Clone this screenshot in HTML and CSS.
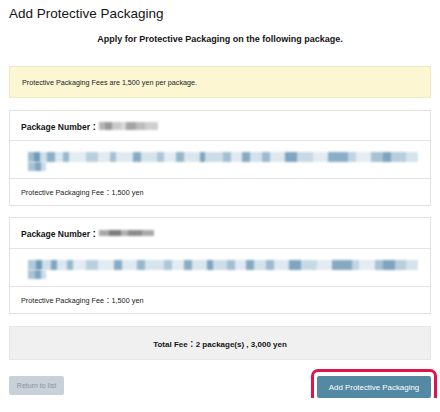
FILE: index.html
```html
<!DOCTYPE html>
<html lang="en">
<head>
<meta charset="utf-8">
<title>Add Protective Packaging</title>
<link rel="stylesheet" href="styles.css">
</head>
<body>
<main class="page">
  <h1 class="title">Add Protective Packaging</h1>
  <p class="lead">Apply for Protective Packaging on the following package.</p>

  <div class="notice">Protective Packaging Fees are 1,500 yen per package.</div>

  <section class="card">
    <div class="card-head">
      <span class="label">Package Number：</span>
      <span class="masked masked-a"></span>
    </div>
    <div class="card-addr">
      <div class="addr-line addr-long"></div>
      <div class="addr-line addr-short"></div>
    </div>
    <div class="card-fee">Protective Packaging Fee：1,500 yen</div>
  </section>

  <section class="card">
    <div class="card-head">
      <span class="label">Package Number：</span>
      <span class="masked masked-b"></span>
    </div>
    <div class="card-addr">
      <div class="addr-line addr-long alt"></div>
      <div class="addr-line addr-short"></div>
    </div>
    <div class="card-fee">Protective Packaging Fee：1,500 yen</div>
  </section>

  <div class="total">Total Fee：2 package(s) , 3,000 yen</div>

  <div class="actions">
    <button class="btn btn-back" type="button">Return to list</button>
    <span class="highlight">
      <button class="btn btn-primary" type="button">Add Protective Packaging</button>
    </span>
  </div>
</main>
</body>
</html>
```

FILE: styles.css
```css
* { box-sizing: border-box; }

html, body {
  margin: 0;
  padding: 0;
  background: #ffffff;
}

body {
  font-family: "Liberation Sans", Arial, "Noto Sans CJK JP", sans-serif;
  color: #141414;
}

.page {
  padding: 0 9px;
  display: flex;
  flex-direction: column;
}

.title {
  margin: 6px 0 0;
  font-size: 13.5px;
  font-weight: normal;
  line-height: 16px;
  color: #141414;
}

.lead {
  margin: 12px 0 0;
  font-size: 9px;
  font-weight: bold;
  line-height: 11px;
  text-align: center;
}

.notice {
  margin-top: 21px;
  height: 32px;
  display: flex;
  align-items: center;
  padding: 0 12px;
  background: #fcf6d2;
  border: 1px solid #f1e8c4;
  font-size: 7.2px;
  color: #222;
}

.card {
  border: 1px solid #e2e2e2;
  background: #fff;
  margin-top: 12px;
}

.card + .card { margin-top: 11px; }

.card-head {
  height: 30px;
  display: flex;
  align-items: center;
  padding: 0 11px;
  border-bottom: 1px solid #e4e4e4;
}

.card + .card .card-head { height: 31px; }

.label {
  font-size: 8.5px;
  font-weight: bold;
}

.masked {
  display: inline-block;
  height: 8px;
  margin-left: 1px;
  filter: blur(0.8px);
}

.masked-a {
  width: 59px;
  background: linear-gradient(90deg, #b5b5b5 0 10%, #9a9a9a 10% 22%, #c9c9c9 22% 38%, #d8d8d8 38% 46%, #a4a4a4 46% 62%, #bdbdbd 62% 78%, #cfcfcf 78% 100%);
}

.masked-b {
  width: 55px;
  height: 6px;
  background: linear-gradient(90deg, #a8a8a8 0 18%, #7d7d7d 18% 40%, #b1b1b1 40% 52%, #8c8c8c 52% 78%, #a9a9a9 78% 100%);
}

.card-addr {
  height: 38px;
  padding: 11px 12px 0 18px;
  border-bottom: 1px solid #e4e4e4;
}

.addr-line {
  height: 10px;
  filter: blur(1px);
}

.addr-long {
  width: 100%;
  background:
    linear-gradient(90deg,
      #9fbbd0 0 1.5%, #6f9ab8 1.5% 3%, #cfdfe9 3% 5%, #8cafc6 5% 7%, #dbe7ef 7% 9%,
      #98b8cc 9% 10.5%, #e2ecf2 10.5% 15%, #b9cfdd 15% 18%, #e1ebf2 18% 21%, #a5c1d3 21% 22.5%,
      #dfe9f0 22.5% 27%, #88abc4 27% 29%, #d6e4ed 29% 33%, #adc7d8 33% 35%, #e3ecf2 35% 38%,
      #96b6cb 38% 40%, #dae6ee 40% 44%, #7ea4bf 44% 45.5%, #cddde8 45.5% 50%, #a2bfd2 50% 52%,
      #e0eaf1 52% 55%, #87aac3 55% 57%, #d3e2eb 57% 60%, #9cbad0 60% 62%, #dde8ef 62% 66%,
      #7ea4bf 66% 69%, #c7d9e5 69% 73%, #e3ecf2 73% 77%, #8badc5 77% 82%, #c0d5e2 82% 84%,
      #e4edf3 84% 88%, #a6c2d4 88% 91%, #7ea4bf 91% 93%, #b7cedd 93% 97%, #d4e3ec 97% 100%);
}

.addr-long.alt {
  background:
    linear-gradient(90deg,
      #b0c9da 0 2%, #6f9ab8 2% 3.5%, #cfdfe9 3.5% 6%, #7fa5c0 6% 7.5%, #dbe7ef 7.5% 10%,
      #98b8cc 10% 11.5%, #e2ecf2 11.5% 15%, #b9cfdd 15% 18%, #e1ebf2 18% 22%, #88abc4 22% 24%,
      #dfe9f0 24% 28%, #97b7cc 28% 30%, #d6e4ed 30% 35%, #adc7d8 35% 37%, #e3ecf2 37% 40%,
      #8aadc5 40% 42%, #dae6ee 42% 46%, #7ea4bf 46% 47.5%, #cddde8 47.5% 51%, #a2bfd2 51% 53%,
      #e0eaf1 53% 56%, #87aac3 56% 58%, #d3e2eb 58% 61%, #9cbad0 61% 63%, #dde8ef 63% 67%,
      #7ea4bf 67% 70%, #c7d9e5 70% 74%, #e3ecf2 74% 78%, #86a9c2 78% 83%, #c0d5e2 83% 85%,
      #e4edf3 85% 89%, #a6c2d4 89% 91%, #7ea4bf 91% 94%, #b7cedd 94% 97%, #d4e3ec 97% 100%);
}

.addr-short {
  width: 18px;
  height: 9px;
  background: linear-gradient(90deg, #a8c3d6 0 40%, #7fa5c0 40% 75%, #cadbe7 75% 100%);
}

.card-fee {
  height: 26px;
  display: flex;
  align-items: center;
  padding: 0 11px;
  font-size: 7.3px;
  color: #222;
}

.total {
  margin-top: 12px;
  height: 34px;
  display: flex;
  align-items: center;
  justify-content: center;
  background: #f0f0f0;
  border: 1px solid #e6e6e6;
  font-size: 8px;
  font-weight: bold;
  color: #141414;
}

.actions {
  margin-top: 16px;
  display: flex;
  justify-content: space-between;
  align-items: flex-start;
}

.btn {
  font-family: "Liberation Sans", Arial, sans-serif;
  border: none;
  border-radius: 2px;
  margin: 0;
  cursor: pointer;
}

.btn-back {
  width: 55px;
  height: 19px;
  padding: 0;
  background: #c9d0d8;
  color: #8c939b;
  font-size: 7px;
}

.highlight {
  position: relative;
  display: inline-flex;
}

.highlight::after {
  content: "";
  position: absolute;
  left: -6px;
  right: -6px;
  top: -7px;
  bottom: -6px;
  border: 3px solid #e0134a;
  border-radius: 7px;
  pointer-events: none;
}

.btn-primary {
  width: 114px;
  height: 22px;
  padding: 0;
  background: #5489a4;
  color: #ffffff;
  font-size: 7.9px;
}
```
